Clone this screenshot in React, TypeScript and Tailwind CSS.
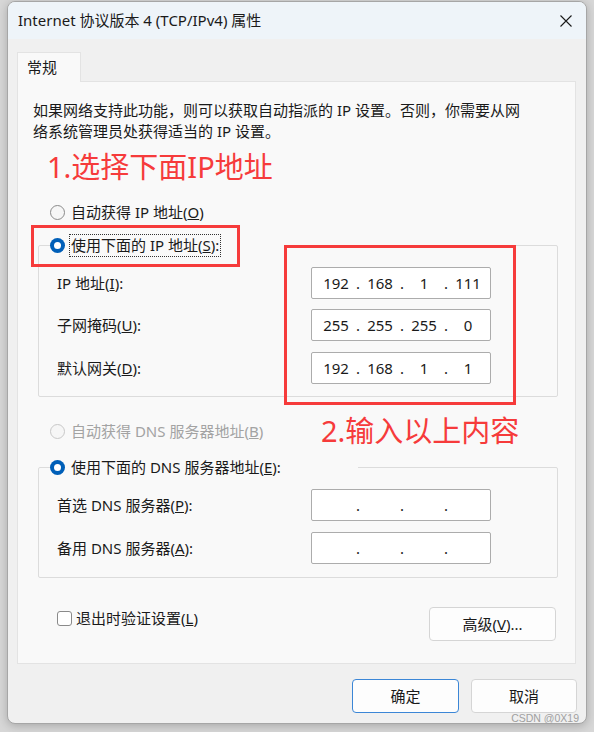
const RED = 'border-[#f63b3b]';

function Radio({ checked, disabled }: { checked?: boolean; disabled?: boolean }) {
  if (checked) {
    return (
      <span className="flex h-[15px] w-[15px] shrink-0 items-center justify-center rounded-full bg-[#005fb8]">
        <span className="h-[7px] w-[7px] rounded-full bg-white" />
      </span>
    );
  }
  return (
    <span
      className={
        disabled
          ? 'h-[15px] w-[15px] shrink-0 rounded-full border border-[#c8c8c8] bg-[#f6f6f6]'
          : 'h-[15px] w-[15px] shrink-0 rounded-full border border-[#8a8a8a] bg-[#f6f6f6]'
      }
    />
  );
}

function IpField({ parts }: { parts: string[] }) {
  return (
    <div className="flex h-[32px] w-[180px] items-center rounded-[2px] border border-[#acacac] bg-white pl-[5px] text-[15px] text-[#1a1a1a]">
      {parts.map((p, i) => (
        <div key={i} className="flex items-center">
          <span className="w-[38px] text-center">{p}</span>
          {i < 3 && <span className="w-[6px] text-center">.</span>}
        </div>
      ))}
    </div>
  );
}

function FieldRow({ label, parts }: { label: React.ReactNode; parts: string[] }) {
  return (
    <div className="flex items-center">
      <span className="w-[272px] pl-[18px]">{label}</span>
      <IpField parts={parts} />
    </div>
  );
}

export default function App() {
  return (
    <div className="relative h-[732px] w-[594px] overflow-hidden bg-[#d7d7d7] pl-[7px] pt-[1px] font-['Noto_Sans','Noto_Sans_CJK_SC',sans-serif] text-[15px] text-[#1a1a1a]">
      <div className="flex h-[723px] w-[580px] flex-col overflow-hidden rounded-[8px] border border-[#a6a6a6] bg-[#f0f0f0] shadow-[0_2px_10px_rgba(0,0,0,0.22)]">
        {/* title bar */}
        <div className="flex h-[37px] shrink-0 items-center bg-[#eef4f9] pl-[10px]">
          <span>Internet 协议版本 4 (TCP/IPv4) 属性</span>
          <div className="flex-1" />
          <svg className="mr-[14px]" width="12" height="12" viewBox="0 0 12 12">
            <path d="M0.5 0.5 L11.5 11.5 M11.5 0.5 L0.5 11.5" stroke="#1a1a1a" strokeWidth="1.1" />
          </svg>
        </div>

        <div className="flex flex-col px-[9px] pt-[13px]">
          {/* tab */}
          <div className="relative z-10 -mb-px flex h-[30px] w-[64px] items-center border border-b-0 border-[#e3e3e3] bg-[#f9f9f9] pl-[9px]">
            常规
          </div>

          {/* tab panel */}
          <div className="relative flex h-[583px] w-[559px] flex-col border border-[#e3e3e3] bg-[#f9f9f9]">
            <p className="pl-[15px] pt-[18px] leading-[21px]">
              如果网络支持此功能，则可以获取自动指派的 IP 设置。否则，你需要从网
              <br />
              络系统管理员处获得适当的 IP 设置。
            </p>

            <div className="mt-[7px] pl-[29px] text-[29px] leading-[36px] text-[#f63b3b]">1.选择下面IP地址</div>

            <div className="mt-[15px] flex h-[24px] items-center gap-[6px] pl-[32px]">
              <Radio />
              <span>
                自动获得 IP 地址(<u>O</u>)
              </span>
            </div>

            <fieldset className="ml-[20px] mt-[9px] w-[520px] rounded-[2px] border border-[#dcdcdc] pb-[12px]">
              <legend className="ml-[11px] w-[250px]">
                <div className="flex h-[24px] items-center gap-[4px]">
                  <Radio checked />
                  <span className="border border-dotted border-[#333] px-[1px] leading-[21px]">
                    使用下面的 IP 地址(<u>S</u>):
                  </span>
                </div>
              </legend>
              <div className="mt-[10px] flex flex-col">
                <FieldRow label={<>IP 地址(<u>I</u>):</>} parts={['192', '168', '1', '111']} />
                <div className="mt-[10px]">
                  <FieldRow label={<>子网掩码(<u>U</u>):</>} parts={['255', '255', '255', '0']} />
                </div>
                <div className="mt-[11px]">
                  <FieldRow label={<>默认网关(<u>D</u>):</>} parts={['192', '168', '1', '1']} />
                </div>
              </div>
            </fieldset>

            <div className="mt-[16px] flex items-center pl-[32px]">
              <div className="flex w-[271px] items-center gap-[6px] text-[#a3a3a3]">
                <Radio disabled />
                <span>
                  自动获得 DNS 服务器地址(<u>B</u>)
                </span>
              </div>
              <span className="text-[29px] leading-[36px] text-[#f63b3b]">2.输入以上内容</span>
            </div>

            <fieldset className="ml-[20px] mt-[6px] w-[520px] rounded-[2px] border border-[#dcdcdc] pb-[13px]">
              <legend className="ml-[11px] w-[308px]">
                <div className="flex h-[24px] items-center gap-[6px]">
                  <Radio checked />
                  <span>
                    使用下面的 DNS 服务器地址(<u>E</u>):
                  </span>
                </div>
              </legend>
              <div className="mt-[10px] flex flex-col">
                <FieldRow label={<>首选 DNS 服务器(<u>P</u>):</>} parts={['', '', '', '']} />
                <div className="mt-[11px]">
                  <FieldRow label={<>备用 DNS 服务器(<u>A</u>):</>} parts={['', '', '', '']} />
                </div>
              </div>
            </fieldset>

            <div className="mt-[29px] flex items-start justify-between pl-[39px] pr-[19px]">
              <div className="flex h-[22px] items-center gap-[4px]">
                <span className="h-[15px] w-[15px] rounded-[3px] border border-[#8a8a8a] bg-white" />
                <span>
                  退出时验证设置(<u>L</u>)
                </span>
              </div>
              <button className="h-[34px] w-[127px] rounded-[4px] border border-[#d5d5d5] bg-[#fdfdfd]">
                高级(<u>V</u>)...
              </button>
            </div>

            {/* annotation boxes */}
            <div className={`absolute left-[13px] top-[143px] h-[42px] w-[209px] border-[3px] ${RED}`} />
            <div className={`absolute left-[266px] top-[163px] h-[160px] w-[232px] border-[3px] ${RED}`} />
          </div>

          {/* dialog buttons */}
          <div className="mt-[15px] flex justify-end gap-[12px]">
            <button className="h-[34px] w-[107px] rounded-[4px] border-[1.5px] border-[#3b86d6] bg-[#fdfdfd]">确定</button>
            <button className="h-[34px] w-[106px] rounded-[4px] border border-[#d5d5d5] bg-[#fdfdfd]">取消</button>
          </div>
        </div>
      </div>

      <span className="absolute right-[15px] top-[711px] font-['Liberation_Sans',sans-serif] text-[10.5px] text-[#a0a0a0]">
        CSDN @0X19
      </span>
    </div>
  );
}
